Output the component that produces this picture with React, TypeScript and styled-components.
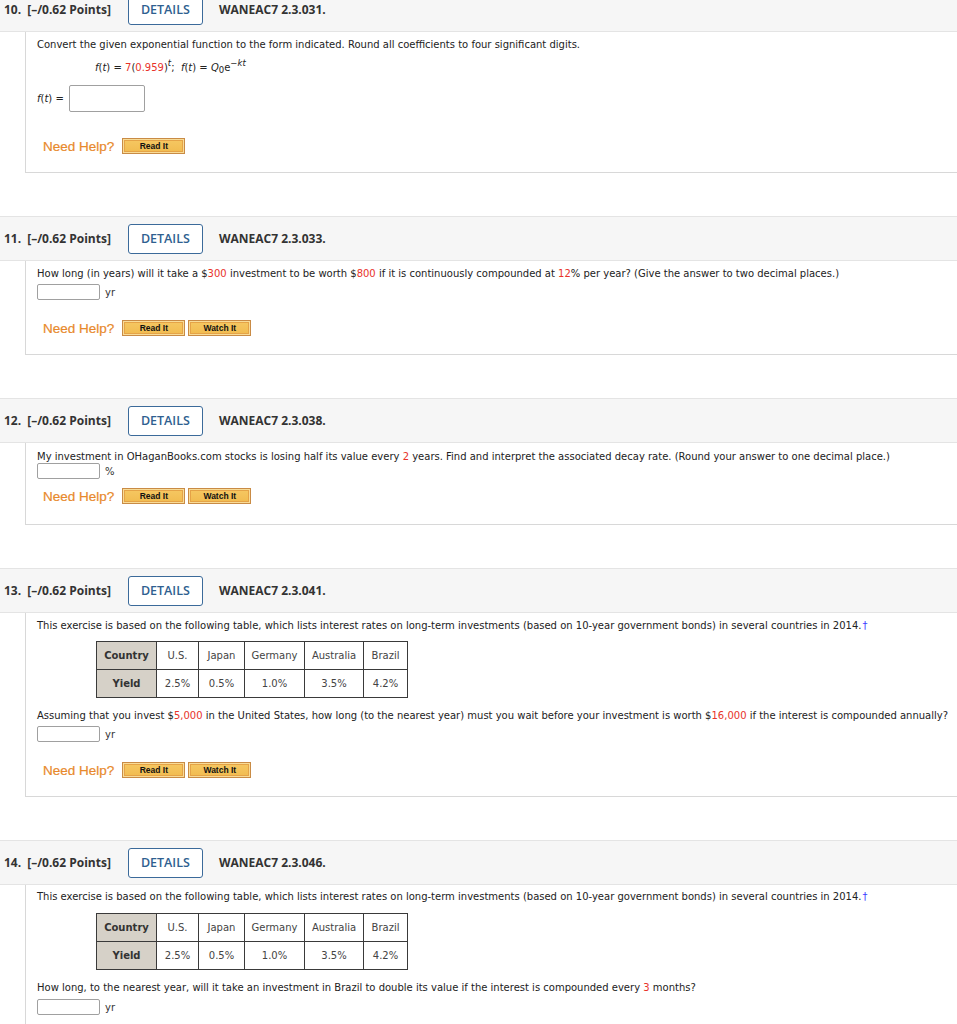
import React from "react";
import styled, { createGlobalStyle } from "styled-components";

const Global = createGlobalStyle`
  html, body { margin: 0; padding: 0; background: #fff; }
  body { font-family: "DejaVu Sans", Verdana, sans-serif; color: #222; overflow: hidden; }
`;

const Page = styled.div`
  display: flex;
  flex-direction: column;
  margin-top: -13px;
`;

const Section = styled.section`
  display: flex;
  flex-direction: column;
  margin-bottom: 43px;
`;

const Header = styled.div`
  display: flex;
  align-items: center;
  height: 45px;
  box-sizing: border-box;
  background: #f6f6f6;
  border-top: 1px solid #e4e4e4;
  border-bottom: 1px solid #e4e4e4;
  padding-left: 4px;
  font-family: "Open Sans", sans-serif;
  font-weight: 700;
  font-size: 12px;
  color: #333;
`;

const Num = styled.span`
  margin-right: 6px;
`;

const DetailsButton = styled.button`
  margin-left: 17px;
  width: 75px;
  height: 30px;
  box-sizing: border-box;
  border: 1.5px solid #3b6a9a;
  border-radius: 3px;
  background: #fff;
  color: #2f5f90;
  font-family: "Open Sans", sans-serif;
  font-weight: 600;
  font-size: 12.5px;
  padding: 0;
`;

const Code = styled.span`
  margin-left: 16px;
`;

const Panel = styled.div<{ $pt: number; $pb: number }>`
  display: flex;
  flex-direction: column;
  align-items: flex-start;
  margin-left: 25px;
  border-left: 1px solid #d8d8d8;
  border-bottom: 1px solid #d8d8d8;
  padding: ${(p) => `${p.$pt}px 12px ${p.$pb}px 11px`};
`;

const Text = styled.div<{ $mt?: number }>`
  font-size: 10px;
  line-height: 13px;
  color: #222;
  white-space: nowrap;
  margin-top: ${(p) => p.$mt ?? 0}px;
`;

const Red = styled.span`
  color: #e8332a;
`;

const Dagger = styled.span`
  color: #3a3aff;
  margin-left: 1px;
`;

const Formula = styled.div<{ $mt?: number }>`
  font-size: 10px;
  line-height: 14px;
  margin-left: 58px;
  margin-top: ${(p) => p.$mt ?? 0}px;
  white-space: nowrap;
`;

const It = styled.i`
  font-style: italic;
`;

const Sup = styled.sup`
  font-size: 8.5px;
  vertical-align: 5px;
  line-height: 0;
`;

const Sub = styled.sub`
  font-size: 8.5px;
  vertical-align: -2px;
  line-height: 0;
`;

const AnswerRow = styled.div<{ $mt?: number }>`
  display: flex;
  align-items: center;
  gap: 5px;
  margin-top: ${(p) => p.$mt ?? 0}px;
  font-size: 10px;
`;

const Input = styled.div<{ $w: number; $h: number }>`
  width: ${(p) => p.$w}px;
  height: ${(p) => p.$h}px;
  box-sizing: border-box;
  border: 1px solid #a0a0a0;
  border-radius: 2px;
  background: #fff;
`;

const Unit = styled.span`
  color: #333;
`;

const HelpRow = styled.div<{ $mt?: number }>`
  display: flex;
  align-items: center;
  margin-top: ${(p) => p.$mt ?? 0}px;
  margin-left: 6px;
`;

const HelpLabel = styled.span`
  font-family: "Liberation Sans", Arial, sans-serif;
  font-size: 13.5px;
  color: #e8892c;
  margin-right: 8px;
  -webkit-text-stroke: 0.2px #e8892c;
`;

const HelpButton = styled.button`
  width: 63px;
  height: 16px;
  box-sizing: border-box;
  padding: 0;
  margin-right: 3px;
  border: 1px solid #c98b45;
  background: linear-gradient(#f6c863, #f1bb4f);
  box-shadow: inset 0 0 0 1px #f8dc98, inset 0 0 0 2px #e5a347;
  font-family: "Liberation Sans", Arial, sans-serif;
  font-weight: 700;
  font-size: 8.5px;
  color: #111;
`;

const Table = styled.table<{ $mt?: number }>`
  margin-left: 59px;
  margin-top: ${(p) => p.$mt ?? 0}px;
  border-collapse: collapse;
  border: 1.5px solid #3a3a3a;
  font-size: 10px;
`;

const Cell = styled.td<{ $w: number; $head?: boolean }>`
  width: ${(p) => p.$w}px;
  height: 28px;
  box-sizing: border-box;
  padding: 0;
  text-align: center;
  border: 1px solid #3a3a3a;
  background: ${(p) => (p.$head ? "#d6d1c8" : "#fff")};
  color: ${(p) => (p.$head ? "#333" : "#444")};
  font-weight: ${(p) => (p.$head ? 700 : 400)};
`;

const widths = [60, 42, 46, 60, 59, 44];
const countries = ["Country", "U.S.", "Japan", "Germany", "Australia", "Brazil"];
const yields = ["Yield", "2.5%", "0.5%", "1.0%", "3.5%", "4.2%"];

function YieldTable({ mt }: { mt: number }) {
  return (
    <Table $mt={mt}>
      <tbody>
        <tr>
          {countries.map((c, i) => (
            <Cell key={c} $w={widths[i]} $head={i === 0}>
              {c}
            </Cell>
          ))}
        </tr>
        <tr>
          {yields.map((c, i) => (
            <Cell key={c} $w={widths[i]} $head={i === 0}>
              {c}
            </Cell>
          ))}
        </tr>
      </tbody>
    </Table>
  );
}

function Head({ n, code }: { n: number; code: string }) {
  return (
    <Header>
      <Num>{n}.</Num>
      <span>[–/0.62 Points]</span>
      <DetailsButton>DETAILS</DetailsButton>
      <Code>{code}</Code>
    </Header>
  );
}

function Help({ mt, watch }: { mt: number; watch?: boolean }) {
  return (
    <HelpRow $mt={mt}>
      <HelpLabel>Need Help?</HelpLabel>
      <HelpButton>Read It</HelpButton>
      {watch && <HelpButton>Watch It</HelpButton>}
    </HelpRow>
  );
}

const tableIntro = (
  <>
    This exercise is based on the following table, which lists interest rates on long-term investments (based on
    10-year government bonds) in several countries in 2014.<Dagger>†</Dagger>
  </>
);

export default function App() {
  return (
    <>
      <Global />
      <Page>
        <Section>
          <Head n={10} code="WANEAC7 2.3.031." />
          <Panel $pt={6} $pb={18}>
            <Text>
              Convert the given exponential function to the form indicated. Round all coefficients to four significant
              digits.
            </Text>
            <Formula $mt={10}>
              <It>f</It>(<It>t</It>) = <Red>7</Red>(<Red>0.959</Red>)<Sup><It>t</It></Sup>;&nbsp; <It>f</It>(<It>t</It>) = <It>Q</It>
              <Sub>0</Sub>e<Sup>−<It>kt</It></Sup>
            </Formula>
            <AnswerRow $mt={10}>
              <span>
                <It>f</It>(<It>t</It>) =
              </span>
              <Input $w={76} $h={27} />
            </AnswerRow>
            <Help mt={26} />
          </Panel>
        </Section>

        <Section>
          <Head n={11} code="WANEAC7 2.3.033." />
          <Panel $pt={6} $pb={18}>
            <Text>
              How long (in years) will it take a $<Red>300</Red> investment to be worth $<Red>800</Red> if it is
              continuously compounded at <Red>12</Red>% per year? (Give the answer to two decimal places.)
            </Text>
            <AnswerRow $mt={4}>
              <Input $w={63} $h={16} />
              <Unit>yr</Unit>
            </AnswerRow>
            <Help mt={20} watch />
          </Panel>
        </Section>

        <Section>
          <Head n={12} code="WANEAC7 2.3.038." />
          <Panel $pt={7} $pb={20}>
            <Text>
              My investment in OHaganBooks.com stocks is losing half its value every <Red>2</Red> years. Find and
              interpret the associated decay rate. (Round your answer to one decimal place.)
            </Text>
            <AnswerRow $mt={0}>
              <Input $w={63} $h={16} />
              <Unit>%</Unit>
            </AnswerRow>
            <Help mt={9} watch />
          </Panel>
        </Section>

        <Section>
          <Head n={13} code="WANEAC7 2.3.041." />
          <Panel $pt={6} $pb={18}>
            <Text>{tableIntro}</Text>
            <YieldTable mt={9} />
            <Text $mt={11}>
              Assuming that you invest $<Red>5,000</Red> in the United States, how long (to the nearest year) must you
              wait before your investment is worth $<Red>16,000</Red> if the interest is compounded annually?
            </Text>
            <AnswerRow $mt={4}>
              <Input $w={63} $h={16} />
              <Unit>yr</Unit>
            </AnswerRow>
            <Help mt={20} watch />
          </Panel>
        </Section>

        <Section>
          <Head n={14} code="WANEAC7 2.3.046." />
          <Panel $pt={5} $pb={19}>
            <Text>{tableIntro}</Text>
            <YieldTable mt={10} />
            <Text $mt={11}>
              How long, to the nearest year, will it take an investment in Brazil to double its value if the interest
              is compounded every <Red>3</Red> months?
            </Text>
            <AnswerRow $mt={5}>
              <Input $w={63} $h={16} />
              <Unit>yr</Unit>
            </AnswerRow>
          </Panel>
        </Section>
      </Page>
    </>
  );
}
